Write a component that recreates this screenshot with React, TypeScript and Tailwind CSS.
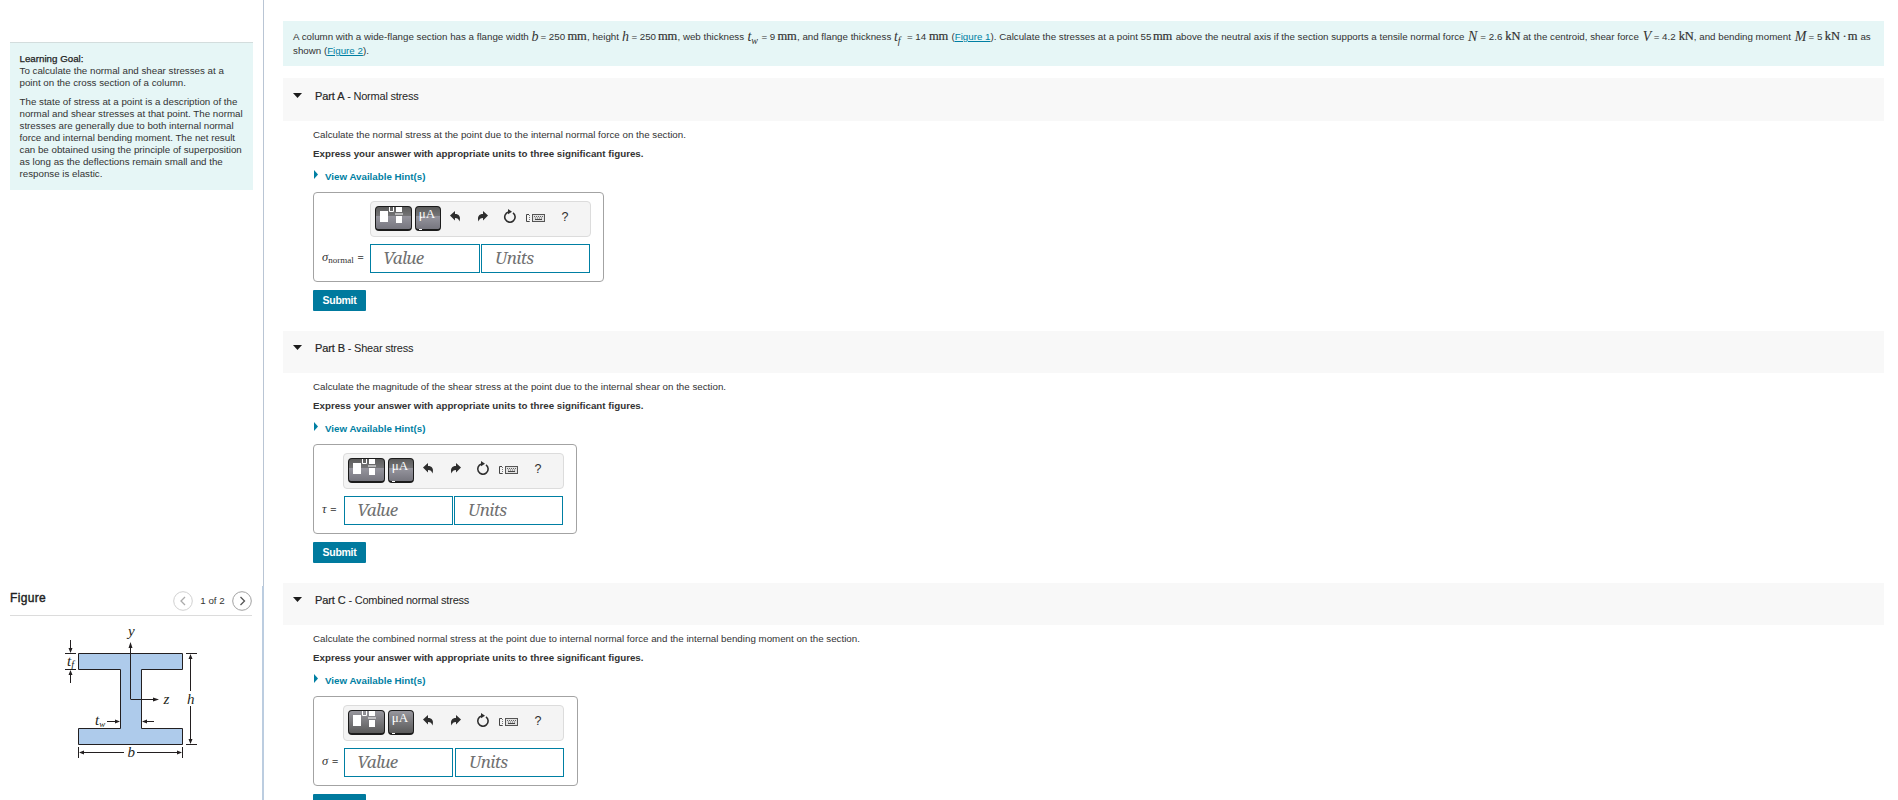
import type { ReactNode } from 'react'

type PartProps = {
  letter: string
  title: string
  question: string
  symbol: ReactNode
  labelWidth: string
  boxWidth: string
  headerClass: string
  toolbarClass: string
  valueClass: string
  flip?: boolean
}

function Run({ w, children }: { w: string; children: ReactNode }) {
  return <span className={`${w} shrink-0 whitespace-pre`}>{children}</span>
}

function Unit({ w, children }: { w: string; children: ReactNode }) {
  return (
    <span className={`${w} shrink-0 whitespace-pre font-["Liberation_Serif",serif] text-[12.5px] tracking-[-0.1px] [-webkit-text-stroke:0.2px]`}>
      {children}
    </span>
  )
}

function Var({ w, children, sub }: { w: string; children: ReactNode; sub?: string }) {
  return (
    <span className={`${w} shrink-0 whitespace-pre font-["Liberation_Serif",serif] text-[14px] italic`}>
      {children}
      {sub && <sub className="text-[10px] leading-none">{sub}</sub>}
    </span>
  )
}

function Intro() {
  return (
    <div className="h-[45px] bg-[#e6f6f6] pl-[10px] pt-2 text-[9.75px] leading-[15px] text-[#333]">
      <div className="flex h-[14px]">
        <Run w="w-[238.4px]">A column with a wide-flange section has a flange width</Run>
        <Var w="w-[9px]">b</Var>
        <Run w="w-[27px]">= 250</Run>
        <Unit w="w-[19.6px]">mm</Unit>
        <Run w="w-[35px]">, height</Run>
        <Var w="w-[9.4px]">h</Var>
        <Run w="w-[26.6px]">= 250</Run>
        <Unit w="w-[19.5px]">mm</Unit>
        <Run w="w-[70px]">, web thickness</Run>
        <Var w="w-[14px]" sub="w">t</Var>
        <Run w="w-[16px]">= 9</Run>
        <Unit w="w-[19.5px]">mm</Unit>
        <Run w="w-[97px]">, and flange thickness</Run>
        <Var w="w-[13px]" sub="f">t</Var>
        <Run w="w-[22px]">= 14</Run>
        <Unit w="w-[22.5px]">mm</Unit>
        <Run w="w-[201.5px]">
          (<a className="text-[#007fa3] underline">Figure 1</a>). Calculate the stresses at a point 55
        </Run>
        <Unit w="w-[22.7px]">mm</Unit>
        <Run w="w-[292.3px]">above the neutral axis if the section supports a tensile normal force</Run>
        <Var w="w-[12.4px]">N</Var>
        <Run w="w-[25px]">= 2.6</Run>
        <Unit w="w-[17.6px]">kN</Unit>
        <Run w="w-[119.7px]">at the centroid, shear force</Run>
        <Var w="w-[11px]">V</Var>
        <Run w="w-[25px]">= 4.2</Run>
        <Unit w="w-[15.2px]">kN</Unit>
        <Run w="w-[101px]">, and bending moment</Run>
        <Var w="w-[13.7px]">M</Var>
        <Run w="w-[16.3px]">= 5</Run>
        <Unit w="w-[17.7px]">kN</Unit>
        <Unit w="w-[5.3px]">·</Unit>
        <Unit w="w-[12.6px]">m</Unit>
        <Run w="w-[12px]">as</Run>
      </div>
      <div>
        shown (<a className="text-[#007fa3] underline">Figure 2</a>).
      </div>
    </div>
  )
}

function Toolbar({ className, flip }: { className: string; flip: boolean }) {
  const shade = flip
    ? 'bg-linear-to-b from-[#98979e] to-[#5a5a5a]'
    : 'bg-[linear-gradient(#5c5c5c_0%,#747476_40%,#96959e_41%,#76767e_100%)]'
  return (
    <div className={`flex h-9 w-[221px] rounded-[4px] border border-[#dcdcdc] bg-[#f4f4f4] pl-1 pt-1 ${className}`}>
      {/* templates */}
      <div className={`h-[25px] w-[37px] rounded-[4px] border border-b-2 border-[#1b1b1b] ${shade}`}>
        <svg className="block" width="35" height="22" fill="#fff">
          <rect x="4" y="4" width="8" height="11" />
          <path d="M13.500 0v4.500h4V0" fill="none" stroke="#fff" />
          <rect x="20" y="0" width="6" height="5" />
          <rect x="19" y="6.500" width="8" height="1" />
          <rect x="20" y="9" width="6" height="7" />
        </svg>
      </div>
      {/* units */}
      <div className={`relative ml-[3px] h-[25px] w-[26px] rounded-[4px] border border-b-2 border-[#1b1b1b] pr-0.5 text-center font-["Liberation_Serif",serif] text-[13px] leading-[14px] text-white ${shade}`}>
        μA
        <span className="absolute -bottom-px left-[3px] h-px w-[3px] bg-white" />
      </div>
      <svg className="ml-[4px] block" width="145" height="25" fill="#2e2e2e">
        <path d="M5 9.500l5-4.500v3c4 0 6 2.500 4.500 7.500c-.8-2.500-2-3.500-4.500-3.500v2.500z" />
        <path d="M43 9.500l-5-4.500v3c-4 0-6 2.500-4.500 7.500c.8-2.500 2-3.500 4.500-3.500v2.500z" />
        <path d="M68 6.800a5.200 5.200 0 1 1-4.500-.8" fill="none" stroke="#2e2e2e" strokeWidth="1.600" />
        <path d="M63 3l4 2.800-4 2.400z" />
        <path d="M84 8.500h-2.500v7H84" fill="none" stroke="#444" />
        <path d="M84.500 9v7" stroke="#777" strokeDasharray="1 1" />
        <rect x="87.500" y="8.500" width="12" height="7" fill="#e2e2e2" stroke="#555" />
        <path d="M89 10.500h9M90 12h8" stroke="#666" strokeDasharray="1 1" />
        <path d="M90 13.500h7" stroke="#444" />
        <text x="116.500" y="14.500" fontSize="12.500" fontFamily="Liberation Sans, Arial, sans-serif">?</text>
      </svg>
    </div>
  )
}

function Part(p: PartProps) {
  return (
    <section className="h-[252px]">
      <div className={`flex bg-[#f8f8f8] pl-[10px] ${p.headerClass}`}>
        <svg className="mt-[4px]" width="9" height="5" fill="#1c1c1c">
          <path d="M0 0h9L4.500 5z" />
        </svg>
        <h2 className="ml-[13px] text-[11px] leading-[14px] tracking-[-0.22px] text-[#252525]">
          <span className="tracking-[-0.1px] [-webkit-text-stroke:0.2px]">Part {p.letter}</span> - {p.title}
        </h2>
      </div>

      <div className="pl-[30px] text-[#333]">
        <p className="pt-[7px] text-[9.75px] leading-[13px]">{p.question}</p>
        <p className="mt-[6px] text-[9.75px] font-bold leading-[13px]">
          Express your answer with appropriate units to three significant figures.
        </p>
        <div className="mt-[10px] flex h-[14px] text-[9.75px] font-bold leading-[14px] text-[#007fa3]">
          <svg className="ml-px mr-[7px]" width="4" height="9" fill="#007fa3">
            <path d="M0 0l4 4.500L0 9z" />
          </svg>
          View Available Hint(s)
        </div>

        {/* answer box */}
        <div className={`mt-2 h-[90px] rounded-[4px] border border-[#a3a3a3] pt-2 ${p.boxWidth}`}>
          <Toolbar className={p.toolbarClass} flip={!!p.flip} />
          <div className="mt-[7px] flex">
            <div className={`flex gap-1 pl-2 pt-[6px] text-[9.75px] leading-[14px] ${p.labelWidth}`}>
              {p.symbol}
              <span className="[-webkit-text-stroke:0.3px]">=</span>
            </div>
            <div className={`h-[29px] border border-[#007fa3] pl-3 font-["Noto_Serif","Liberation_Serif",serif] text-[17px] italic leading-[25px] tracking-[-0.7px] text-[#707070] ${p.valueClass}`}>
              Value
            </div>
            <div className='h-[29px] w-[109px] border border-[#007fa3] pl-[13px] font-["Noto_Serif","Liberation_Serif",serif] text-[17px] italic leading-[25px] tracking-[-0.7px] text-[#707070]'>
              Units
            </div>
          </div>
        </div>

        <button className="mt-2 block h-[21px] w-[53px] rounded-[1px] bg-[#007a9e] text-[10.5px] font-bold leading-[21px] tracking-[-0.3px] text-white">
          Submit
        </button>
      </div>
    </section>
  )
}

function BeamFigure() {
  return (
    <svg className="block" width="262" height="150" fill="none" stroke="#231f20">
      <path d="M78.500 37.500h104v16h-41v59h41v16h-104v-16h42v-59h-42z" fill="#aecbeb" />
      {/* axes */}
      <path d="M130.500 83V28M130.500 83.500h24" />
      {/* flange thickness */}
      <path d="M65 37.500h11M65 53.500h11M70.500 24v10M70.500 57v10" />
      {/* web thickness */}
      <path d="M107 105.500h10M144 105.500h10" />
      {/* height and width */}
      <path d="M186 37.500h11M186 128.500h11M190.500 40v35M190.500 90v37M78.500 131v11M182.500 131v11M82 136.500h42M137 136.500h42" />
      <g fill="#231f20" stroke="none">
        <path d="M130.500 26l2 6h-4zM159 83.500l-6 2v-4z" />
        <path d="M70.500 37l2-5h-4zM70.500 54l2 5h-4zM120 105.500l-5 2v-4zM142 105.500l5 2v-4z" />
        <path d="M190.500 38l2 5h-4zM190.500 128l2-5h-4zM79 136.500l5 2v-4zM182 136.500l-5 2v-4z" />
        <g fontFamily="Liberation Serif, serif" fontStyle="italic" fontSize="15">
          <text x="128" y="20">y</text>
          <text x="163.500" y="87.500">z</text>
          <text x="187" y="87.500">h</text>
          <text x="127.500" y="141">b</text>
          <text x="67" y="50">t<tspan dy="2" fontSize="10">f</tspan></text>
          <text x="95" y="109">t<tspan dy="1.500" fontSize="9">w</tspan></text>
        </g>
      </g>
    </svg>
  )
}

function Sidebar() {
  return (
    <aside className="flex h-[800px] w-[264px] shrink-0 flex-col">
      <div className="h-[586px] border-r border-[#b9c5d4] pl-[10px] pt-[42px]">
        <div className="h-[148px] w-[243px] border-t border-[#d3dddd] bg-[#e6f6f6] pl-[9.500px] pt-[10px] text-[9.75px] leading-[12px] text-[#333]">
          <div className="text-[#222] [-webkit-text-stroke:0.25px]">Learning Goal:</div>
          <p className="whitespace-pre">{'To calculate the normal and shear stresses at a\npoint on the cross section of a column.'}</p>
          <p className="mt-[7px] whitespace-pre">
            {'The state of stress at a point is a description of the\nnormal and shear stresses at that point. The normal\nstresses are generally due to both internal normal\nforce and internal bending moment. The net result\ncan be obtained using the principle of superposition\nas long as the deflections remain small and the\nresponse is elastic.'}
          </p>
        </div>
      </div>
      <div className="flex-1 border-r-2 border-[#bccde0]">
        <div className="ml-[10px] flex h-[30px] w-[242px] border-b border-[#dcdcdc]">
          <h3 className="pt-[5px] text-[12px] leading-[14px] tracking-[0.35px] text-[#222] [-webkit-text-stroke:0.4px]">Figure</h3>
          <div className="ml-auto flex items-center text-[9.75px] text-[#333]">
            <svg width="20" height="20" fill="none" stroke="#d0d0d0">
              <circle cx="10" cy="10" r="9.300" />
              <path d="M12 6l-4 4 4 4" stroke="#aaa" strokeWidth="1.300" />
            </svg>
            <span className="w-[39px] pt-0.5 text-center">1 of 2</span>
            <svg width="20" height="20" fill="none" stroke="#a0a0a0">
              <circle cx="10" cy="10" r="9.300" />
              <path d="M8.500 6l4 4-4 4" stroke="#555" strokeWidth="1.300" />
            </svg>
          </div>
        </div>
        <BeamFigure />
      </div>
    </aside>
  )
}

export default function App() {
  return (
    <div className='flex h-[800px] w-full overflow-hidden bg-white font-["Liberation_Sans",Arial,sans-serif]'>
      <Sidebar />
      <main className="ml-[19px] w-[1601px] shrink-0 pt-[21px]">
        <Intro />
        <div className="pt-3">
          <Part
            letter="A"
            title="Normal stress"
            question="Calculate the normal stress at the point due to the internal normal force on the section."
            symbol={<span className='font-["Liberation_Serif",serif] text-[12.5px]'><i>σ</i><sub className="text-[9px] leading-none">normal</sub></span>}
            labelWidth="w-[56px]"
            boxWidth="w-[291px]"
            headerClass="h-[43px] pt-[11px]"
            toolbarClass="ml-[56px]"
            valueClass="w-[110px] mr-px"
          />
          <Part
            letter="B"
            title="Shear stress"
            question="Calculate the magnitude of the shear stress at the point due to the internal shear on the section."
            symbol={<i className='font-["Liberation_Serif",serif] text-[12.5px]'>τ</i>}
            labelWidth="w-[30px]"
            boxWidth="w-[264px]"
            headerClass="mt-px h-[42px] pt-[10px]"
            toolbarClass="ml-[29px]"
            valueClass="w-[109px] mr-px"
          />
          <Part
            letter="C"
            title="Combined normal stress"
            question="Calculate the combined normal stress at the point due to internal normal force and the internal bending moment on the section."
            symbol={<i className='font-["Liberation_Serif",serif] text-[12.5px]'>σ</i>}
            labelWidth="w-[30px]"
            boxWidth="w-[265px]"
            headerClass="h-[42px] pt-[10px]"
            toolbarClass="ml-[29px]"
            valueClass="w-[109px] mr-[2px]"
            flip
          />
        </div>
      </main>
    </div>
  )
}
